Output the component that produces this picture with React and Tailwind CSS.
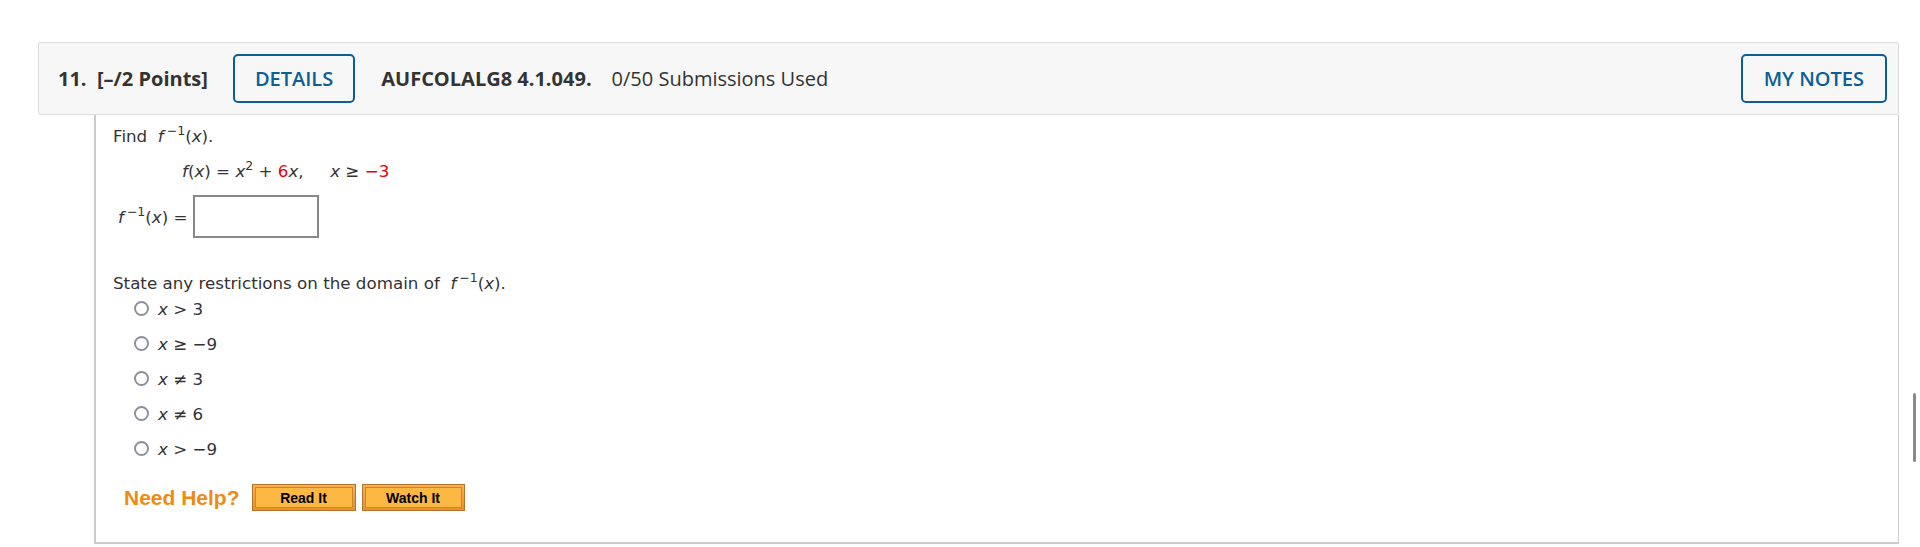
import React from "react";

const body = { fontFamily: '"DejaVu Sans", Verdana, sans-serif' };
const head = { fontFamily: '"Open Sans", "Noto Sans", sans-serif' };

function V({ children }) {
  return <span className="italic">{children}</span>;
}

function Sup({ children, cls = "" }) {
  return <span className={`text-[12.5px] leading-[0] relative -top-[7px] align-baseline ${cls}`}>{children}</span>;
}

function FInv() {
  return (
    <span>
      <V>f</V>
      <Sup cls="ml-[3px]">−1</Sup>
      (<V>x</V>)
    </span>
  );
}

function Radio({ children }) {
  return (
    <div className="flex items-center h-[35px]">
      <span className="w-[15px] h-[15px] rounded-full border-2 border-[#8f8f9d] bg-white ml-[21px] mr-[9px] shrink-0" />
      <span className="text-[16.7px] leading-[20px] text-[#333]">{children}</span>
    </div>
  );
}

function HelpBtn({ label, w }) {
  return (
    <div
      className={`${w} h-[27px] border border-[#b5732c] p-[2px] bg-gradient-to-b from-[#f9b04e] to-[#e8912c]`}
    >
      <div className="h-full w-full border border-[#c98533] bg-[#fdb843] flex items-center justify-center text-[14px] font-bold text-black leading-none"
        style={{ fontFamily: '"Liberation Sans", Arial, sans-serif' }}>
        {label}
      </div>
    </div>
  );
}

export default function App() {
  return (
    <div className="relative w-[1920px] h-[547px] bg-white overflow-hidden">
      <div className="ml-[38px] w-[1861px] pt-[42px]">
        {/* header */}
        <div
          className="h-[73px] bg-[#f7f7f7] border border-[#dddddd] rounded-[2px] flex items-center pl-[19px] pr-[11px] text-[#333]"
          style={head}
        >
          <span className="text-[20px] font-bold whitespace-pre">11.  [–/2 Points]</span>
          <button className="ml-[25px] h-[49px] px-[20px] border-2 border-[#0b5f96] rounded-[5px] text-[#0b5f96] text-[20px] font-semibold bg-[#f7f7f7]">
            DETAILS
          </button>
          <span className="ml-[26px] text-[20px] font-bold">AUFCOLALG8 4.1.049.</span>
          <span className="ml-[20px] text-[20px]">0/50 Submissions Used</span>
          <button className="ml-auto h-[49px] px-[21px] border-2 border-[#0b5f96] rounded-[5px] text-[#0b5f96] text-[20px] font-semibold bg-[#f7f7f7]">
            MY NOTES
          </button>
        </div>
        {/* content */}
        <div
          className="ml-[56px] h-[429px] border-l-2 border-r border-b-2 border-[#cccccc] text-[#333] pl-[17px] pt-[11px]"
          style={body}
        >
          <div className="text-[16.7px] leading-[20px]">
            Find&nbsp; <FInv />.
          </div>
          <div className="mt-[15px] ml-[69px] text-[16.7px] leading-[20px] whitespace-pre">
            <V>f</V>(<V>x</V>) = <V>x</V>
            <Sup>2</Sup> + <span className="text-[#e8000b]">6</span>
            <V>x</V>,     <V>x</V> ≥ <span className="text-[#e8000b]">−3</span>
          </div>
          <div className="mt-[14px] flex items-center">
            <span className="ml-[5px] text-[16.7px] leading-[20px] whitespace-pre">
              <FInv /> = 
            </span>
            <div className="ml-[5px] w-[126px] h-[43px] border-2 border-[#888888] bg-white" />
          </div>
          <div className="mt-[35px] text-[16.7px] leading-[20px]">
            State any restrictions on the domain of&nbsp; <FInv />.
          </div>
          <div className="-mt-[2px] flex flex-col">
            <Radio><V>x</V> &gt; 3</Radio>
            <Radio><V>x</V> ≥ −9</Radio>
            <Radio><V>x</V> ≠ 3</Radio>
            <Radio><V>x</V> ≠ 6</Radio>
            <Radio><V>x</V> &gt; −9</Radio>
          </div>
          <div className="mt-[18px] flex items-center">
            <span
              className="ml-[11px] text-[21px] font-bold text-[#ef8a14] leading-none"
              style={{ fontFamily: '"Liberation Sans", Arial, sans-serif' }}
            >
              Need Help?
            </span>
            <div className="ml-[12px]"><HelpBtn label="Read It" w="w-[104px]" /></div>
            <div className="ml-[6px]"><HelpBtn label="Watch It" w="w-[103px]" /></div>
          </div>
        </div>
      </div>
      <div className="absolute left-[1913px] top-[393px] w-[3px] h-[69px] bg-[#8a8a8a] rounded-full" />
    </div>
  );
}
